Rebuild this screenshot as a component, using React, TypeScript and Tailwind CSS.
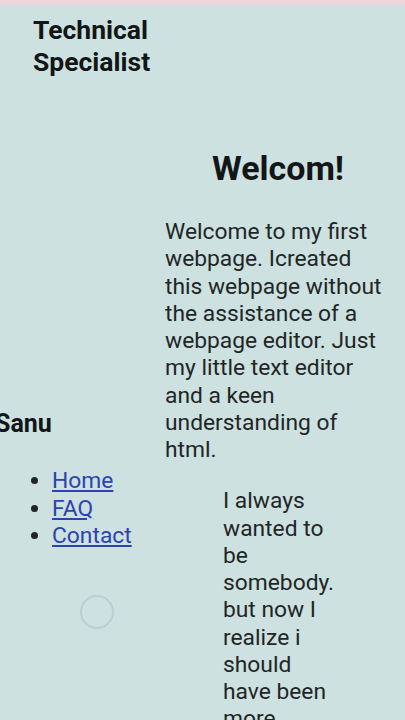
export default function App() {
  return (
    <div className="min-h-[720px] overflow-hidden bg-[#cde1e1] text-[#1f2626] [font-family:Roboto,'Liberation_Sans',sans-serif]">
      <div className="h-[5px] bg-[#ecd6dc]" />
      <div className="flex">
        <div className="w-[165px] shrink-0">
          <h1 className="ml-[33px] mt-[9px] text-[26.5px] font-bold leading-[32px] text-[#121616]">
            Technical Specialist
          </h1>
          <h2 className="ml-[-5px] mt-[332px] text-[25px] font-bold leading-[28px] text-[#121616]">
            Sanu
          </h2>
          <ul className="mt-[29px] list-disc pl-[52px] text-[22.8px] leading-[27.5px]">
            <li>
              <a href="#" className="text-[#2c43b0] underline">Home</a>
            </li>
            <li>
              <a href="#" className="text-[#2c43b0] underline">FAQ</a>
            </li>
            <li>
              <a href="#" className="text-[#2c43b0] underline">Contact</a>
            </li>
          </ul>
          <div className="ml-[80px] mt-[45px] h-[34px] w-[34px] rounded-full border-2 border-[#bccfd0]" />
        </div>
        <div className="w-[226px] shrink-0">
          <h2 className="mt-[143px] text-center text-[34px] font-bold leading-[40px] text-[#121616]">
            Welcom!
          </h2>
          <p className="mt-[30px] text-[22.8px] leading-[27.25px]">
            Welcome to my first webpage. Icreated this webpage without the assistance of a webpage editor. Just my little text editor and a keen understanding of html.
          </p>
          <p className="ml-[58px] mt-[24px] w-[116px] text-[22.8px] leading-[27.25px]">
            I always wanted to be somebody. but now I realize i should have been more specific.
          </p>
        </div>
      </div>
    </div>
  );
}
